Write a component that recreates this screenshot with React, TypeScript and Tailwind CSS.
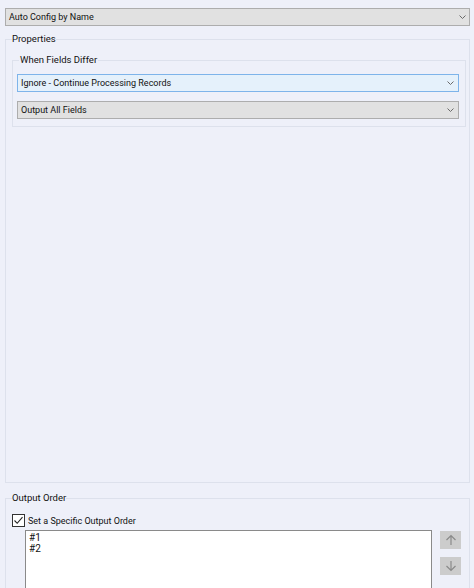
import React from 'react';

const Chevron: React.FC = () => (
  <svg width="7" height="4" viewBox="0 0 7 4" className="shrink-0">
    <path d="M0.5 0.5 L3.5 3.5 L6.5 0.5" fill="none" stroke="#6a6a6a" strokeWidth="1" />
  </svg>
);

const Select: React.FC<{ label: string; focused?: boolean; tight?: boolean }> = ({ label, focused, tight }) => (
  <div
    className={
      (focused
        ? 'h-[18px] flex items-center justify-between pl-[3px] border border-[#7eb4ea] bg-[#e5f1fb]'
        : 'h-[18px] flex items-center justify-between pl-[3px] border border-[#adadad] bg-[#e1e1e1]') +
      (tight ? ' pr-[3px]' : ' pr-[4px]')
    }
  >
    <span className="leading-[16px]">{label}</span>
    <Chevron />
  </div>
);

const ArrowButton: React.FC<{ up?: boolean }> = ({ up }) => (
  <div className="w-[21px] h-[18px] bg-[#cccccc] flex items-center justify-center">
    <svg width="12" height="12" viewBox="0 0 12 12">
      {up ? (
        <path d="M6 11 V1.5 M1.5 6 L6 1.5 L10.5 6" fill="none" stroke="#8a8a8a" strokeWidth="1.2" />
      ) : (
        <path d="M6 1 V10.5 M1.5 6 L6 10.5 L10.5 6" fill="none" stroke="#8a8a8a" strokeWidth="1.2" />
      )}
    </svg>
  </div>
);

export default function App() {
  return (
    <div
      className="w-[474px] h-[588px] overflow-hidden bg-[#eef0f9] text-[9px] text-[#111] pt-[8px] pl-[5px] pr-[4px]"
      style={{ fontFamily: 'Roboto, "Liberation Sans", sans-serif' }}
    >
      <Select label="Auto Config by Name" tight />

      {/* Properties */}
      <fieldset className="mt-[7px] h-[450px] border border-[#dde1ec] pl-[6px] pr-[3px]">
        <legend className="px-0 text-[9.5px] leading-[12px]">Properties</legend>
        <fieldset className="mt-[9px] border border-[#dde1ec] pl-[4px] pr-[6px] pb-[7px]">
          <legend className="ml-[2px] px-[1px] text-[9.5px] leading-[12px]">When Fields Differ</legend>
          <div className="mt-[8px] flex flex-col gap-[9px]">
            <Select label="Ignore - Continue Processing Records" focused />
            <Select label="Output All Fields" />
          </div>
        </fieldset>
      </fieldset>

      {/* Output Order */}
      <fieldset className="mt-[9px] h-[120px] border border-[#dde1ec] pl-[6px] pr-[3px]">
        <legend className="px-0 text-[9.5px] leading-[12px]">Output Order</legend>
        <div className="mt-[10px] flex items-center gap-[3px] h-[13px]">
          <div className="w-[13px] h-[13px] border border-[#333] bg-white flex items-center justify-center">
            <svg width="11" height="11" viewBox="0 0 11 11">
              <path d="M1.5 5.5 L4.2 8.3 L9.5 2.2" fill="none" stroke="#222" strokeWidth="1.1" />
            </svg>
          </div>
          <span className="text-[9px] leading-[12px]">Set a Specific Output Order</span>
        </div>
        <div className="mt-[3px] flex gap-[8px]">
          <div className="ml-[13px] w-[407px] h-[120px] border border-[#8a8a8a] bg-white px-[3px] pt-[1px] leading-[11px] text-[10px]">
            <div>#1</div>
            <div>#2</div>
          </div>
          <div className="flex flex-col gap-[8px] pt-[1px]">
            <ArrowButton up />
            <ArrowButton />
          </div>
        </div>
      </fieldset>
    </div>
  );
}
